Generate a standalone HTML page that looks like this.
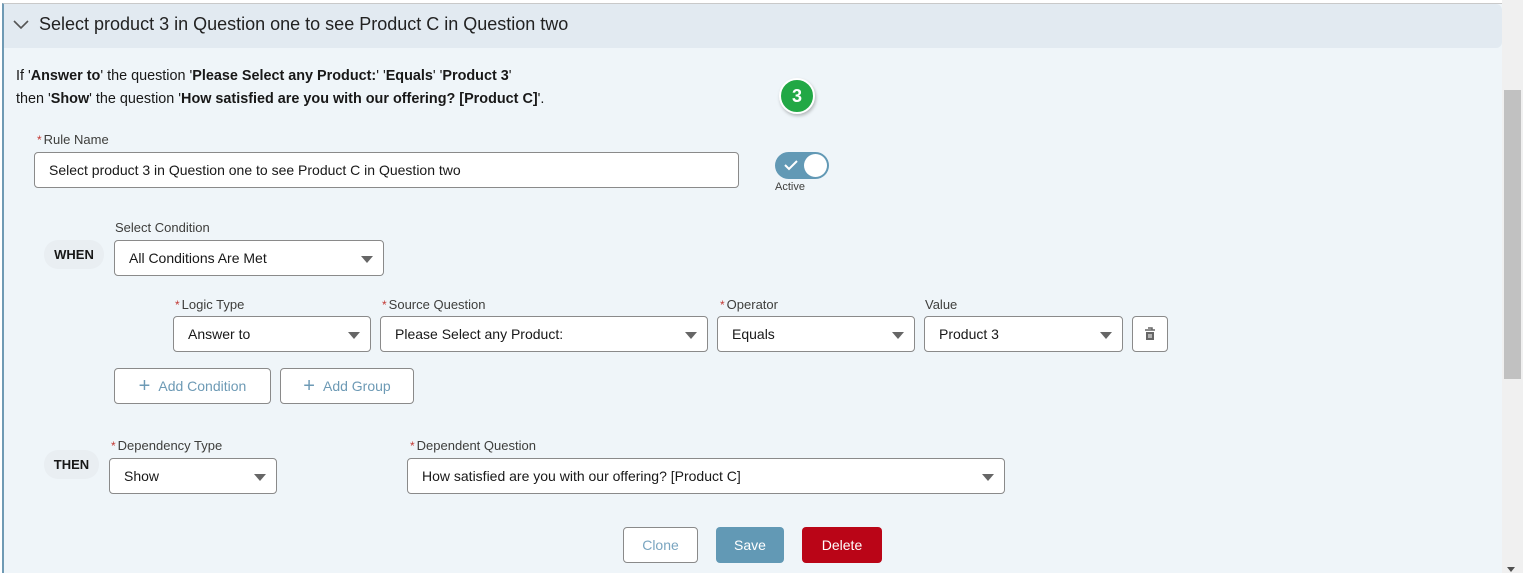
<!DOCTYPE html>
<html><head><meta charset="utf-8"><style>
*{box-sizing:border-box;margin:0;padding:0}
html,body{width:1530px;height:573px;overflow:hidden}
body{background:#fff;font-family:"Liberation Sans",sans-serif;color:#181818;position:relative}
.a{position:absolute}
.panel{left:2px;top:3px;width:1500px;height:570px;background:#eff5f9;border-left:2px solid #6f9ab4;border-top:1px solid #c9c9c9}
.hdr{left:4px;top:4px;width:1498px;height:44px;background:#e2eaf1;border-radius:0 6px 6px 0}
.lbl{font-size:13px;color:#3e3e3c}
.req{color:#c23934;font-size:12px;margin-right:2px}
.box{background:#fff;border:1px solid #8a8a8a;border-radius:4px;font-size:14px;padding-left:14px;display:flex;align-items:center}
.sel::after{content:"";position:absolute;right:10px;top:15px;border-left:6px solid transparent;border-right:6px solid transparent;border-top:7px solid #666}
.pill{background:#e9eef2;border-radius:14px;font-weight:bold;font-size:13px;display:flex;align-items:center;justify-content:center}
.btn{border-radius:4px;font-size:14px;display:flex;align-items:center;justify-content:center}
</style></head><body>
<div class="a panel"></div>
<div class="a hdr"></div>
<svg class="a" style="left:13px;top:20px" width="16" height="10"><path d="M1 1 L8 8 L15 1" fill="none" stroke="#555" stroke-width="1.6"/></svg>
<div class="a" style="left:39px;top:14px;font-size:18px;color:#222">Select product 3 in Question one to see Product C in Question two</div>
<div class="a" style="left:16px;top:65px;font-size:14.4px;line-height:23px">If '<b>Answer to</b>' the question '<b>Please Select any Product:</b>' '<b>Equals</b>' '<b>Product 3</b>'<br>then '<b>Show</b>' the question '<b>How satisfied are you with our offering? [Product C]</b>'.</div>
<div class="a" style="left:779px;top:78px;width:36px;height:36px;border-radius:50%;background:#22a845;border:2px solid #fff;box-shadow:1px 2px 3px rgba(0,0,0,.25);color:#fff;font-weight:bold;font-size:18px;display:flex;align-items:center;justify-content:center">3</div>
<div class="a lbl" style="left:37px;top:132px"><span class="req">*</span>Rule Name</div>
<div class="a box" style="left:34px;top:152px;width:705px;height:36px">Select product 3 in Question one to see Product C in Question two</div>
<div class="a" style="left:775px;top:152px;width:54px;height:27px;border-radius:14px;background:#6299b5"></div>
<div class="a" style="left:804px;top:154px;width:23px;height:23px;border-radius:50%;background:#fff"></div>
<svg class="a" style="left:783px;top:158px" width="16" height="14"><path d="M2 7 L6 11 L14 3" fill="none" stroke="#fff" stroke-width="2"/></svg>
<div class="a" style="left:775px;top:181px;font-size:11px;color:#3e3e3c">Active</div>

<div class="a pill" style="left:44px;top:240px;width:60px;height:29px">WHEN</div>
<div class="a lbl" style="left:115px;top:220px">Select Condition</div>
<div class="a box sel" style="left:114px;top:240px;width:270px;height:36px">All Conditions Are Met</div>

<div class="a lbl" style="left:175px;top:297px"><span class="req">*</span>Logic Type</div>
<div class="a box sel" style="left:173px;top:316px;width:198px;height:36px">Answer to</div>
<div class="a lbl" style="left:382px;top:297px"><span class="req">*</span>Source Question</div>
<div class="a box sel" style="left:380px;top:316px;width:328px;height:36px">Please Select any Product:</div>
<div class="a lbl" style="left:720px;top:297px"><span class="req">*</span>Operator</div>
<div class="a box sel" style="left:717px;top:316px;width:198px;height:36px">Equals</div>
<div class="a lbl" style="left:925px;top:297px">Value</div>
<div class="a box sel" style="left:924px;top:316px;width:199px;height:36px">Product 3</div>
<div class="a box" style="left:1132px;top:316px;width:36px;height:36px;padding:0;justify-content:center"><svg width="12" height="14"><path d="M4 1h4v2M1 3h10" stroke="#666" stroke-width="1.5" fill="none"/><rect x="2" y="5" width="8" height="8" fill="#666"/><path d="M5 7v4M7 7v4" stroke="#fff" stroke-width="1"/></svg></div>

<div class="a btn" style="left:114px;top:368px;width:157px;height:36px;background:#fff;border:1px solid #8a8a8a;color:#6d9ab5"><span style="font-size:20px;margin-right:8px">+</span>Add Condition</div>
<div class="a btn" style="left:280px;top:368px;width:134px;height:36px;background:#fff;border:1px solid #8a8a8a;color:#6d9ab5"><span style="font-size:20px;margin-right:8px">+</span>Add Group</div>

<div class="a pill" style="left:44px;top:450px;width:55px;height:29px">THEN</div>
<div class="a lbl" style="left:111px;top:438px"><span class="req">*</span>Dependency Type</div>
<div class="a box sel" style="left:109px;top:458px;width:168px;height:36px">Show</div>
<div class="a lbl" style="left:410px;top:438px"><span class="req">*</span>Dependent Question</div>
<div class="a box sel" style="left:407px;top:458px;width:598px;height:36px">How satisfied are you with our offering? [Product C]</div>

<div class="a btn" style="left:623px;top:527px;width:75px;height:36px;background:#fff;border:1px solid #8a8a8a;color:#7aa5c0">Clone</div>
<div class="a btn" style="left:716px;top:527px;width:68px;height:36px;background:#6299b5;color:#fff">Save</div>
<div class="a btn" style="left:802px;top:527px;width:80px;height:36px;background:#ba0517;color:#fff">Delete</div>

<div class="a" style="left:1502px;top:0;width:21px;height:573px;background:#f0f0f0"></div>
<div class="a" style="left:1504px;top:90px;width:17px;height:289px;background:#c1c1c1"></div>
<div class="a" style="left:1507px;top:567px;border-left:4px solid transparent;border-right:4px solid transparent;border-top:5px solid #505050"></div>
</body></html>
